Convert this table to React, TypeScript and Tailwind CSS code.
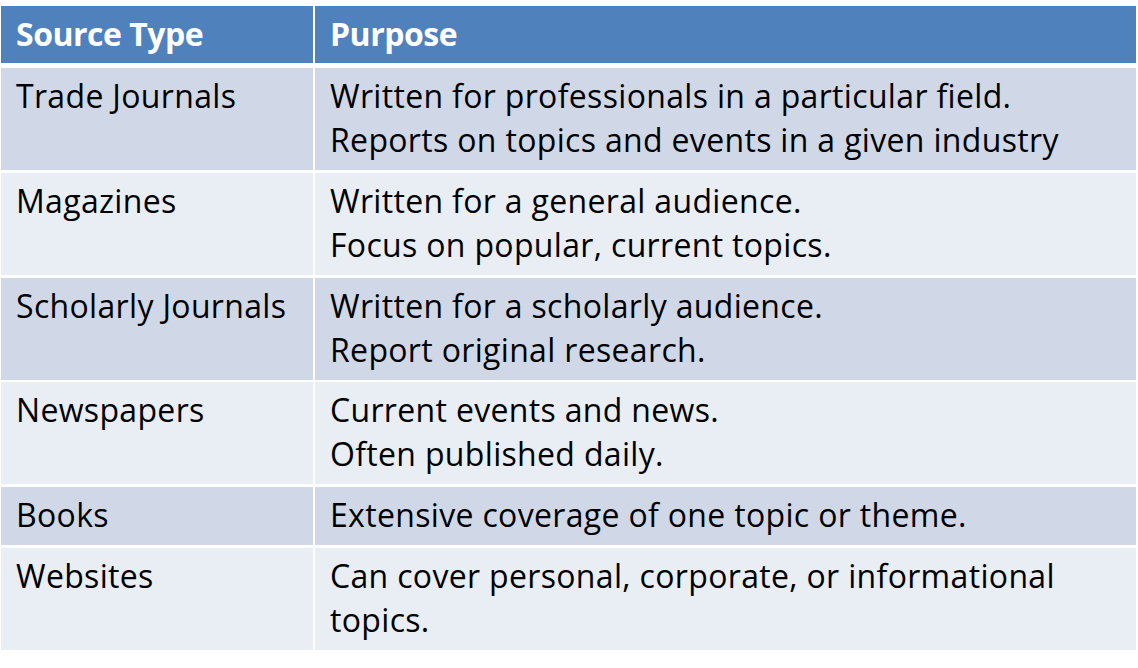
const rows = [
  { type: 'Trade Journals', purpose: ['Written for professionals in a particular field.', 'Reports on topics and events in a given industry'] },
  { type: 'Magazines', purpose: ['Written for a general audience.', 'Focus on popular, current topics.'] },
  { type: 'Scholarly Journals', purpose: ['Written for a scholarly audience.', 'Report original research.'] },
  { type: 'Newspapers', purpose: ['Current events and news.', 'Often published daily.'] },
  { type: 'Books', purpose: ['Extensive coverage of one topic or theme.'] },
  { type: 'Websites', purpose: ['Can cover personal, corporate, or informational', 'topics.'] },
];

export default function App() {
  return (
    <div className="w-[1138px] h-[668px] bg-white font-['Open_Sans',_sans-serif] text-[32px] leading-[44px] text-black">
      <div className="ml-[1px] pt-[6px] w-[1135px] flex flex-col">
        {/* Header */}
        <div className="grid grid-cols-[312px_821px] gap-x-[2px] mb-[5.5px] tracking-[-0.5px]">
          <div className="bg-[#4f81bd] text-white font-bold px-[15px] pt-[6px] pb-[6.7px]">Source Type</div>
          <div className="bg-[#4f81bd] text-white font-bold px-[15px] pt-[6px] pb-[6.7px]">Purpose</div>
        </div>

        {/* Body */}
        <div className="flex flex-col gap-y-[2.5px] tracking-[0.33px]">
          {rows.map((r, i) => {
            const bg = i % 2 === 0 ? 'bg-[#d0d8e8]' : 'bg-[#e9edf4]';
            return (
              <div key={r.type} className="grid grid-cols-[312px_821px] gap-x-[2px]">
                <div className={`${bg} px-[15px] pt-[6px] pb-[8.2px]`}>{r.type}</div>
                <div className={`${bg} px-[15px] pt-[6px] pb-[8.2px]`}>
                  {r.purpose.map((p) => (
                    <div key={p}>{p}</div>
                  ))}
                </div>
              </div>
            );
          })}
        </div>
      </div>
    </div>
  );
}
